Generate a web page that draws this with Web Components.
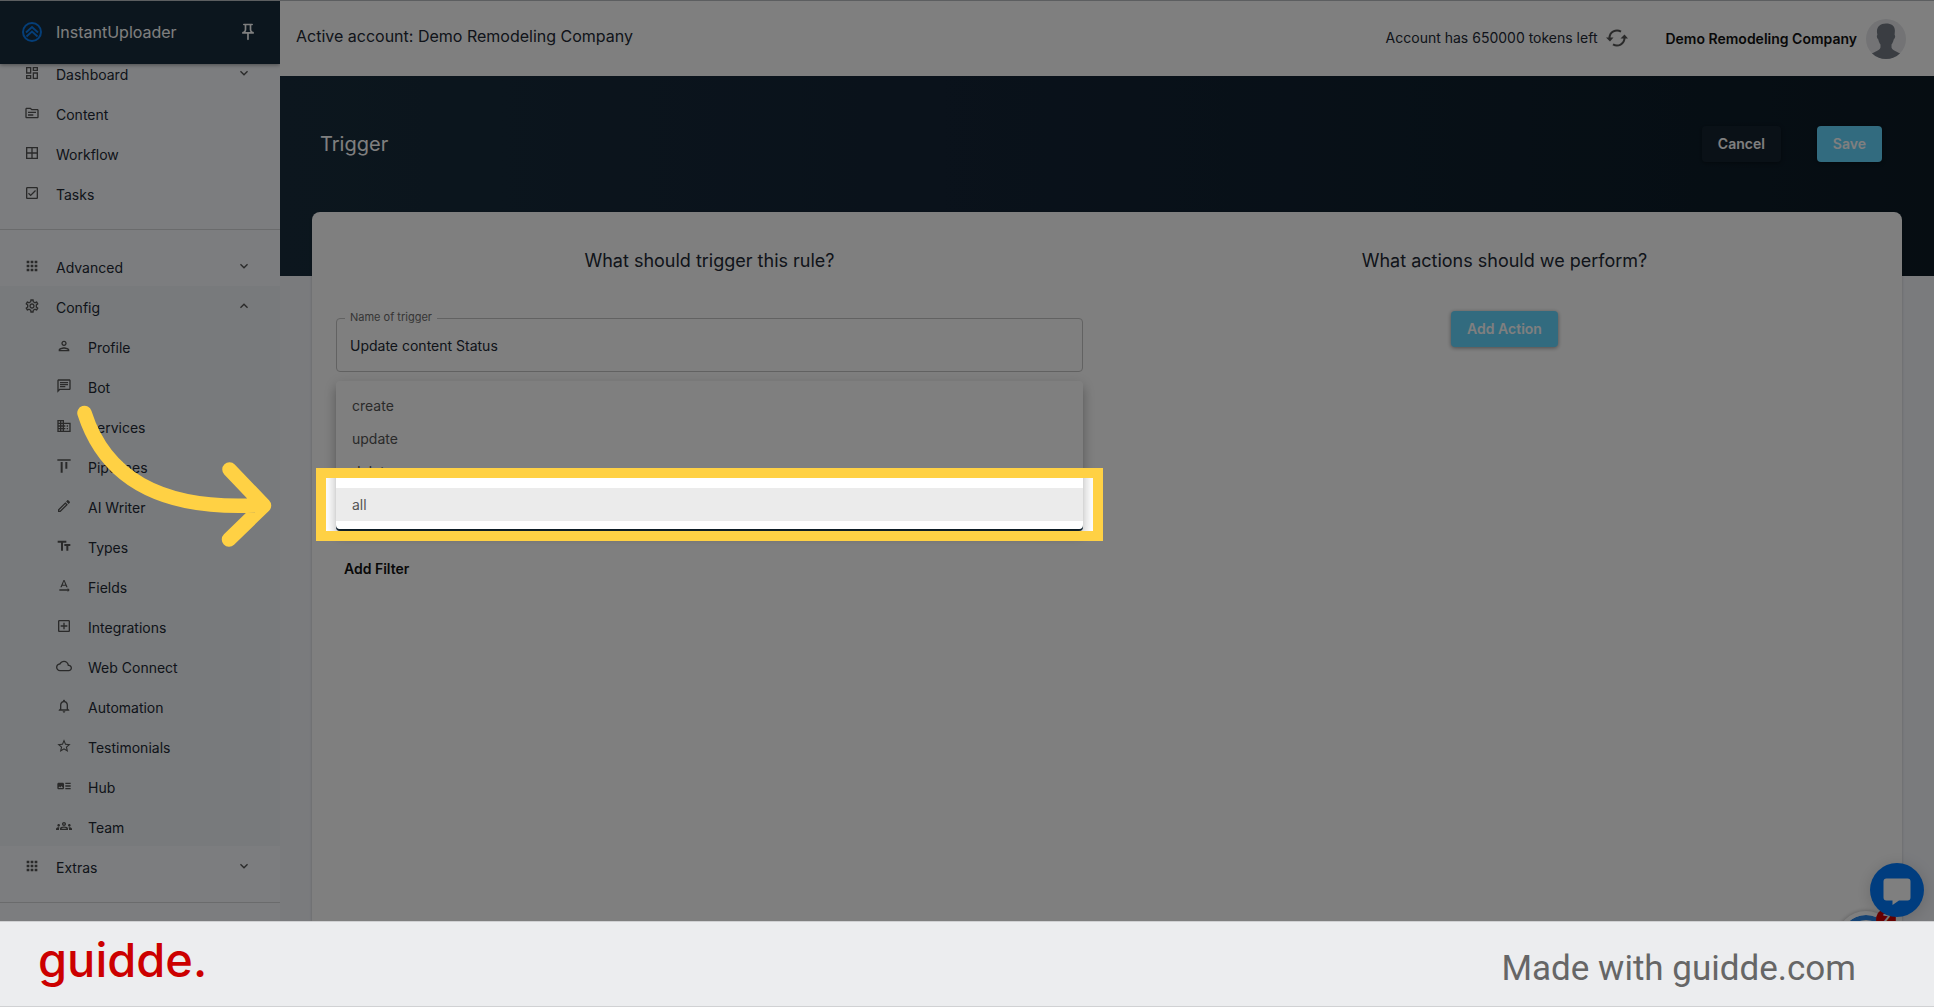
<!DOCTYPE html>
<html lang="en">
<head>
<meta charset="utf-8">
<title>InstantUploader</title>
<style>
  html, body {
    height: 100%;
    margin: 0;
  }

  body {
    --navy: #182d3c;
    --accent: #64d6ff;
    --ink: #222934;
    --mark: #ffd144;
    font-family: Inter, "Liberation Sans", sans-serif;
    font-size: 14px;
    color: var(--ink);
  }
</style>
</head>
<body>
<app-shell>
  <side-nav slot="nav">
    <nav-item icon="dashboard" toggle="down">Dashboard</nav-item>
    <nav-item icon="topic">Content</nav-item>
    <nav-item icon="grid">Workflow</nav-item>
    <nav-item icon="check">Tasks</nav-item>
    <nav-divider></nav-divider>
    <nav-item icon="apps" toggle="down">Advanced</nav-item>
    <nav-group>
      <nav-item icon="settings" toggle="up">Config</nav-item>
      <nav-item sub icon="person">Profile</nav-item>
      <nav-item sub icon="chat">Bot</nav-item>
      <nav-item sub icon="business">Services</nav-item>
      <nav-item sub icon="alignTop">Pipelines</nav-item>
      <nav-item sub icon="pencil">AI Writer</nav-item>
      <nav-item sub icon="textFields">Types</nav-item>
      <nav-item sub icon="textRotation">Fields</nav-item>
      <nav-item sub icon="addBox">Integrations</nav-item>
      <nav-item sub icon="cloud">Web Connect</nav-item>
      <nav-item sub icon="bell">Automation</nav-item>
      <nav-item sub icon="star">Testimonials</nav-item>
      <nav-item sub icon="artTrack">Hub</nav-item>
      <nav-item sub icon="groups">Team</nav-item>
    </nav-group>
    <nav-item icon="apps" toggle="down">Extras</nav-item>
    <nav-divider></nav-divider>
  </side-nav>
  <top-bar slot="top" account="Demo Remodeling Company" tokens="650000"></top-bar>
  <trigger-page slot="page"></trigger-page>
  <chat-launcher slot="chat"></chat-launcher>
  <guide-overlay slot="overlay"></guide-overlay>
  <guide-banner slot="banner"></guide-banner>
</app-shell>

<script>
const ICONS = {
  dashboard: "M19 5v2h-4V5h4M9 5v6H5V5h4m10 8v6h-4v-6h4M9 17v2H5v-2h4M21 3h-8v6h8V3zM11 3H3v10h8V3zm10 8h-8v10h8V11zm-10 4H3v6h8v-6z",
  topic: "M20 6h-8l-2-2H4c-1.1 0-1.99.9-1.99 2L2 18c0 1.1.9 2 2 2h16c1.1 0 2-.9 2-2V8c0-1.1-.9-2-2-2zm0 12H4V6h5.17l2 2H20v10zm-2-6H6v-2h12v2zm-4 4H6v-2h8v2z",
  grid: "M3 3v18h18V3H3zm8 16H5v-6h6v6zm0-8H5V5h6v6zm8 8h-6v-6h6v6zm0-8h-6V5h6v6z",
  check: "M19 3H5c-1.1 0-2 .9-2 2v14c0 1.1.9 2 2 2h14c1.1 0 2-.9 2-2V5c0-1.1-.9-2-2-2zm0 16H5V5h14v14zM17.99 9l-1.41-1.42-6.59 6.59-2.58-2.57-1.42 1.41 4 3.99z",
  apps: "M4 8h4V4H4v4zm6 12h4v-4h-4v4zm-6 0h4v-4H4v4zm0-6h4v-4H4v4zm6 0h4v-4h-4v4zm6-10v4h4V4h-4zm-6 4h4V4h-4v4zm6 6h4v-4h-4v4zm0 6h4v-4h-4v4z",
  down: "M16.59 8.59L12 13.17 7.41 8.59 6 10l6 6 6-6z",
  up: "M12 8l-6 6 1.41 1.41L12 10.83l4.59 4.58L18 14z",
  settings: "M19.43 12.98c.04-.32.07-.64.07-.98 0-.34-.03-.66-.07-.98l2.11-1.65c.19-.15.24-.42.12-.64l-2-3.46c-.09-.16-.26-.25-.44-.25-.06 0-.12.01-.17.03l-2.49 1c-.52-.4-1.08-.73-1.69-.98l-.38-2.65C14.46 2.18 14.25 2 14 2h-4c-.25 0-.46.18-.49.42l-.38 2.65c-.61.25-1.17.59-1.69.98l-2.49-1c-.06-.02-.12-.03-.18-.03-.17 0-.34.09-.43.25l-2 3.46c-.13.22-.07.49.12.64l2.11 1.65c-.04.32-.07.65-.07.98 0 .33.03.66.07.98l-2.11 1.65c-.19.15-.24.42-.12.64l2 3.46c.09.16.26.25.44.25.06 0 .12-.01.17-.03l2.49-1c.52.4 1.08.73 1.69.98l.38 2.65c.03.24.24.42.49.42h4c.25 0 .46-.18.49-.42l.38-2.65c.61-.25 1.17-.59 1.69-.98l2.49 1c.06.02.12.03.18.03.17 0 .34-.09.43-.25l2-3.46c.12-.22.07-.49-.12-.64l-2.11-1.65zm-1.98-1.71c.04.31.05.52.05.73 0 .21-.02.43-.05.73l-.14 1.13.89.7 1.08.84-.7 1.21-1.27-.51-1.04-.42-.9.68c-.43.32-.84.56-1.25.73l-1.06.43-.16 1.13-.2 1.35h-1.4l-.19-1.35-.16-1.13-1.06-.43c-.43-.18-.83-.41-1.23-.71l-.91-.7-1.06.43-1.27.51-.7-1.21 1.08-.84.89-.7-.14-1.13c-.03-.31-.05-.54-.05-.74s.02-.43.05-.73l.14-1.13-.89-.7-1.08-.84.7-1.21 1.27.51 1.04.42.9-.68c.43-.32.84-.56 1.25-.73l1.06-.43.16-1.13.2-1.35h1.39l.19 1.35.16 1.13 1.06.43c.43.18.83.41 1.23.71l.91.7 1.06-.43 1.27-.51.7 1.21-1.07.85-.89.7.14 1.13zM12 8c-2.21 0-4 1.79-4 4s1.79 4 4 4 4-1.79 4-4-1.79-4-4-4zm0 6c-1.1 0-2-.9-2-2s.9-2 2-2 2 .9 2 2-.9 2-2 2z",
  person: "M12 6c1.1 0 2 .9 2 2s-.9 2-2 2-2-.9-2-2 .9-2 2-2m0 10c2.7 0 5.8 1.29 6 2H6c.23-.72 3.31-2 6-2m0-12C9.79 4 8 5.79 8 8s1.79 4 4 4 4-1.79 4-4-1.79-4-4-4zm0 10c-2.67 0-8 1.34-8 4v2h16v-2c0-2.66-5.33-4-8-4z",
  chat: "M4 4h16v12H5.17L4 17.17V4m0-2c-1.1 0-1.99.9-1.99 2L2 22l4-4h14c1.1 0 2-.9 2-2V4c0-1.1-.9-2-2-2H4zm2 10h8v2H6v-2zm0-3h12v2H6V9zm0-3h12v2H6V6z",
  business: "M12 7V3H2v18h20V7H12zM6 19H4v-2h2v2zm0-4H4v-2h2v2zm0-4H4V9h2v2zm0-4H4V5h2v2zm4 12H8v-2h2v2zm0-4H8v-2h2v2zm0-4H8V9h2v2zm0-4H8V5h2v2zm10 12h-8v-2h2v-2h-2v-2h2v-2h-2V9h8v10zm-2-8h-2v2h2v-2zm0 4h-2v2h2v-2z",
  alignTop: "M22 2v2H2V2h20zM7 22h3V6H7v16zm7-6h3V6h-3v10z",
  pencil: "M14.06 9.02l.92.92L5.92 19H5v-.92l9.06-9.06M17.66 3c-.25 0-.51.1-.7.29l-1.83 1.83 3.75 3.75 1.83-1.83c.39-.39.39-1.02 0-1.41l-2.34-2.34c-.2-.2-.45-.29-.71-.29zm-3.6 3.19L3 17.25V21h3.75L17.81 9.94l-3.75-3.75z",
  textFields: "M2.5 4v3h5v12h3V7h5V4h-13zm19 5h-9v3h3v7h3v-7h3V9z",
  textRotation: "M12.75 3h-1.5L6.5 14h2.1l.9-2.2h5l.9 2.2h2.1L12.75 3zm-2.62 7L12 4.98 13.87 10h-3.74zm10.37 8l-3-3v2H5v2h12.5v2l3-3z",
  addBox: "M19 3H5c-1.11 0-2 .9-2 2v14c0 1.1.89 2 2 2h14c1.1 0 2-.9 2-2V5c0-1.1-.9-2-2-2zm0 16H5V5h14v14zm-8-2h2v-4h4v-2h-4V7h-2v4H7v2h4z",
  cloud: "M19.35 10.04C18.67 6.59 15.64 4 12 4 9.11 4 6.6 5.64 5.35 8.04 2.34 8.36 0 10.91 0 14c0 3.31 2.69 6 6 6h13c2.76 0 5-2.24 5-5 0-2.64-2.05-4.78-4.65-4.96zM19 18H6c-2.21 0-4-1.79-4-4 0-2.05 1.53-3.76 3.56-3.97l1.07-.11.5-.95C8.08 7.14 9.94 6 12 6c2.62 0 4.88 1.86 5.39 4.43l.3 1.5 1.53.11c1.56.1 2.78 1.41 2.78 2.96 0 1.65-1.35 3-3 3z",
  bell: "M12 22c1.1 0 2-.9 2-2h-4c0 1.1.9 2 2 2zm6-6v-5c0-3.07-1.63-5.64-4.5-6.32V4c0-.83-.67-1.5-1.5-1.5s-1.5.67-1.5 1.5v.68C7.64 5.36 6 7.92 6 11v5l-2 2v1h16v-1l-2-2zm-2 1H8v-6c0-2.48 1.51-4.5 4-4.5s4 2.02 4 4.5v6z",
  star: "M22 9.24l-7.19-.62L12 2 9.19 8.63 2 9.24l5.46 4.73L5.82 21 12 17.27 18.18 21l-1.63-7.03L22 9.24zM12 15.4l-3.76 2.27 1-4.28-3.32-2.88 4.38-.38L12 6.1l1.71 4.04 4.38.38-3.32 2.88 1 4.28L12 15.4z",
  artTrack: "M22 13h-8v-2h8v2zm0-6h-8v2h8V7zm-8 10h8v-2h-8v2zm-2-8v6c0 1.1-.9 2-2 2H4c-1.1 0-2-.9-2-2V9c0-1.1.9-2 2-2h6c1.1 0 2 .9 2 2zm-1.5 6l-2.25-3-1.75 2.26-1.25-1.51L3.5 15h7z",
  groups: "M4 13c1.1 0 2-.9 2-2s-.9-2-2-2-2 .9-2 2 .9 2 2 2zm1.13 1.1c-.37-.06-.74-.1-1.13-.1-.99 0-1.93.21-2.78.58C.48 14.9 0 15.62 0 16.43V18h4.5v-1.61c0-.83.23-1.61.63-2.29zM20 13c1.1 0 2-.9 2-2s-.9-2-2-2-2 .9-2 2 .9 2 2 2zm4 3.43c0-.81-.48-1.53-1.22-1.85-.85-.37-1.79-.58-2.78-.58-.39 0-.76.04-1.13.1.4.68.63 1.46.63 2.29V18H24v-1.57zm-7.76-2.78c-1.17-.52-2.61-.9-4.24-.9s-3.07.39-4.24.9C6.68 14.13 6 15.21 6 16.39V18h12v-1.61c0-1.18-.68-2.26-1.76-2.74zM8.07 16c.09-.23.13-.39.91-.69.97-.38 1.99-.56 3.02-.56s2.05.18 3.02.56c.77.3.81.46.91.69H8.07zM12 8c.55 0 1 .45 1 1s-.45 1-1 1-1-.45-1-1 .45-1 1-1m0-2c-1.66 0-3 1.34-3 3s1.34 3 3 3 3-1.34 3-3-1.34-3-3-3z",
  pin: "M14 4v5c0 1.12.37 2.16 1 3H9c.65-.86 1-1.9 1-3V4h4m3-2H7c-.55 0-1 .45-1 1s.45 1 1 1h1v5c0 1.66-1.34 3-3 3v2h5.97v7l1 1 1-1v-7H19v-2c-1.66 0-3-1.34-3-3V4h1c.55 0 1-.45 1-1s-.45-1-1-1z"
};

class BaseElement extends HTMLElement {
  constructor() {
    super();
    this.attachShadow({ mode: "open" });
  }

  connectedCallback() {
    this.shadowRoot.innerHTML = `<style>${this.styles}</style>${this.markup}`;
  }
}

class AppShell extends BaseElement {
  get styles() {
    return `
      :host {
        display: grid;
        grid-template: minmax(0, 1fr) auto / 280px minmax(0, 1fr);
        height: 100vh;
        box-sizing: border-box;
        border-top: 1px solid #5c5e60;
        overflow: hidden;
        position: relative;
      }

      main {
        display: flex;
        flex-direction: column;
        min-height: 0;
        overflow: hidden;
      }

      ::slotted([slot="overlay"]) {
        z-index: 2;
      }

      ::slotted([slot="banner"]) {
        z-index: 3;
        grid-column: 1 / -1;
      }
    `;
  }

  get markup() {
    return `
      <slot name="nav"></slot>
      <main>
        <slot name="top"></slot>
        <slot name="page"></slot>
      </main>
      <slot name="chat"></slot>
      <slot name="overlay"></slot>
      <slot name="banner"></slot>
    `;
  }
}

class AppIcon extends BaseElement {
  get styles() {
    return `
      :host {
        display: block;
        flex: none;
        width: 16px;
        height: 16px;
      }

      svg {
        display: block;
        width: 100%;
        height: 100%;
        fill: currentColor;
      }
    `;
  }

  get markup() {
    return `<svg viewBox="0 0 24 24" aria-hidden="true"><path d="${ICONS[this.getAttribute("name")]}"/></svg>`;
  }
}

class SideNav extends BaseElement {
  get styles() {
    return `
      :host {
        display: block;
        min-height: 0;
        overflow: hidden;
        background: #f9fbfe;
      }

      header {
        position: relative;
        z-index: 1;
        display: flex;
        align-items: center;
        gap: 14px;
        height: 63px;
        box-sizing: border-box;
        padding: 0 22px 2px;
        background: var(--navy);
        color: #fff;
        font-size: 16px;
        box-shadow: 0 1px 4px rgba(0, 0, 0, .4);
      }

      a {
        flex: 1;
        color: inherit;
        text-decoration: none;
      }

      button {
        padding: 0;
        border: 0;
        background: none;
        color: inherit;
      }

      app-icon {
        width: 20px;
        height: 20px;
      }

      /* the list is scrolled slightly under the header */
      nav {
        margin-top: -11px;
      }
    `;
  }

  get markup() {
    return `
      <header>
        <svg width="20" height="20" viewBox="0 0 20 20" fill="none" stroke="#0a7cf0" stroke-width="2" aria-hidden="true">
          <circle cx="10" cy="10" r="9"/>
          <path d="M4 10.500 10 5l6 5.500M4.500 14.500 10 9.500l5.500 5" stroke-width="1.900"/>
        </svg>
        <a href="#">InstantUploader</a>
        <button aria-label="Pin"><app-icon name="pin"></app-icon></button>
      </header>
      <nav><slot></slot></nav>
    `;
  }
}

class NavItem extends BaseElement {
  get styles() {
    return `
      :host {
        display: block;
      }

      a {
        display: flex;
        align-items: center;
        gap: 16px;
        height: 40px;
        padding: 0 28px 0 24px;
        color: inherit;
        text-decoration: none;
      }

      :host([sub]) a {
        padding-left: 56px;
      }

      span {
        flex: 1;
        padding-top: 2px;
      }

      app-icon {
        color: #545454;
      }
    `;
  }

  get markup() {
    const toggle = this.getAttribute("toggle");
    return `
      <a href="#">
        <app-icon name="${this.getAttribute("icon")}"></app-icon>
        <span><slot></slot></span>
        ${toggle ? `<app-icon name="${toggle}"></app-icon>` : ""}
      </a>
    `;
  }
}

class NavGroup extends BaseElement {
  get styles() {
    return `
      :host {
        display: block;
        background: #f1f5f8;
      }
    `;
  }

  get markup() {
    return `<slot></slot>`;
  }
}

class NavDivider extends BaseElement {
  get styles() {
    return `
      :host {
        display: block;
        height: 1px;
        margin: 16px 0;
        background: #d4d6d9;
      }
    `;
  }

  get markup() {
    return ``;
  }
}

class TopBar extends BaseElement {
  get styles() {
    return `
      :host {
        display: flex;
        flex: none;
        align-items: center;
        height: 75px;
        box-sizing: border-box;
        padding: 0 28px 0 16px;
        background: #fff;
      }

      h1 {
        flex: 1;
        margin: 0;
        padding-bottom: 6px;
        font-size: 16px;
        font-weight: 400;
      }

      span {
        padding-bottom: 2px;
      }

      button {
        margin: 0 37px 0 9px;
        padding: 0 0 2px;
        border: 0;
        background: none;
      }

      svg {
        display: block;
      }

      b {
        margin-right: 9px;
        font-weight: 600;
        color: #111;
      }
    `;
  }

  get markup() {
    return `
      <h1>Active account: ${this.getAttribute("account")}</h1>
      <span>Account has ${this.getAttribute("tokens")} tokens left</span>
      <button aria-label="Refresh tokens">
        <svg width="22" height="18" viewBox="0 0 22 18" fill="none" stroke="#555" stroke-width="2">
          <path d="M3.500 9A7.500 7.500 0 0 1 15 2.700M18.500 9A7.500 7.500 0 0 1 7 15.300"/>
          <path d="M0 8.500h7.500l-3.500 4zM14.500 9.500H22l-3.500-4z" fill="#555" stroke="none"/>
        </svg>
      </button>
      <b>${this.getAttribute("account")}</b>
      <svg width="40" height="40" viewBox="0 0 40 40" role="img" aria-label="Profile picture">
        <clipPath id="round"><circle cx="20" cy="20" r="20"/></clipPath>
        <g clip-path="url(#round)">
          <path fill="#e6e7ea" d="M0 0h40v40H0z"/>
          <path fill="#747a85" d="M20 4.500c-6 0-9.500 3.500-9 9l.4 2.500c-1 .3-.6 3.500.9 4.500.5 2.500 1.400 4 2.200 5v3c-1 3.500-7 4-9.500 7L8 42h24l3-6.500c-2.500-3-8.500-3.500-9.500-7v-3c.8-1 1.700-2.500 2.200-5 1.500-1 1.900-4.200.9-4.500l.2-3C29.500 7.500 26 4.500 20 4.500z"/>
        </g>
      </svg>
    `;
  }
}

class ActionButton extends BaseElement {
  get styles() {
    return `
      :host {
        display: inline-block;
      }

      button {
        display: block;
        height: 36px;
        padding: 0 16px 2px;
        border: 0;
        border-radius: 4px;
        background: var(--accent);
        box-shadow: 0 1px 4px rgba(0, 0, 0, .4);
        color: #fff;
        font: 600 14px Inter, "Liberation Sans", sans-serif;
      }

      :host([kind="dark"]) button {
        background: #15232f;
      }

      :host([kind="text"]) button {
        padding: 0 8px 2px;
        background: none;
        box-shadow: none;
        color: #111;
      }
    `;
  }

  get markup() {
    return `<button type="button"><slot></slot></button>`;
  }
}

class TextField extends BaseElement {
  get styles() {
    return `
      :host {
        display: block;
        position: relative;
      }

      label {
        position: absolute;
        top: -8px;
        left: 9px;
        padding: 0 5px;
        background: #fff;
        color: #6b6b6b;
        font-size: 11px;
        line-height: 14px;
      }

      input {
        display: block;
        width: 100%;
        height: 54px;
        box-sizing: border-box;
        padding: 0 13px;
        border: 1px solid #c4c4c4;
        border-radius: 4px;
        background: none;
        color: inherit;
        font: inherit;
      }
    `;
  }

  get markup() {
    return `
      <label for="field">${this.getAttribute("label")}</label>
      <input id="field" type="text" value="${this.getAttribute("value")}">
    `;
  }
}

class MenuSelect extends BaseElement {
  get styles() {
    return `
      :host {
        display: block;
        position: relative;
      }

      select {
        display: block;
        width: 100%;
        height: 54px;
        padding: 0 13px;
        border: 2px solid var(--navy);
        border-radius: 4px;
        background: #fff;
        color: inherit;
        font: inherit;
        appearance: none;
      }

      ul {
        position: absolute;
        right: 0;
        bottom: 2px;
        left: 0;
        margin: 0;
        padding: 8px 0;
        border-radius: 4px;
        background: #fff;
        box-shadow: 0 5px 5px -3px rgba(0, 0, 0, .2), 0 8px 10px 1px rgba(0, 0, 0, .14), 0 3px 14px 2px rgba(0, 0, 0, .12);
        list-style: none;
      }

      li {
        padding: 0 16px;
        color: #555;
        line-height: 33px;
      }

      li[aria-selected="true"] {
        background: #ebebeb;
      }
    `;
  }

  get markup() {
    const value = this.getAttribute("value");
    const options = this.getAttribute("options").split(",");
    return `
      <select aria-label="Event">
        ${options.map(o => `<option${o === value ? " selected" : ""}>${o}</option>`).join("")}
      </select>
      <ul role="listbox">
        ${options.map(o => `<li role="option" aria-selected="${o === value}">${o}</li>`).join("")}
      </ul>
    `;
  }
}

class TriggerPage extends BaseElement {
  get styles() {
    return `
      :host {
        display: flex;
        flex: 1;
        flex-direction: column;
        min-height: 0;
        padding: 0 32px;
        background: linear-gradient(90deg, #182d3c, #142436 40%, #0e1f2c 75%, #0c1a25) top / 100% 200px no-repeat #f4f6fb;
      }

      header {
        display: flex;
        align-items: center;
        gap: 36px;
        height: 136px;
        padding: 0 20px 0 8px;
        color: #fff;
      }

      h2 {
        flex: 1;
        margin: 0;
        font-size: 20px;
        font-weight: 400;
      }

      .card {
        display: grid;
        flex: 1;
        grid-template-columns: 1fr 1fr;
        gap: 48px;
        padding: 37px 24px;
        border-radius: 8px 8px 0 0;
        background: #fff;
        box-shadow: 0 1px 3px rgba(0, 0, 0, .2);
      }

      h3 {
        margin: 0 0 45px;
        font-size: 18px;
        font-weight: 400;
        line-height: 24px;
        text-align: center;
      }

      menu-select {
        margin: 105px 0 20px;
      }

      .actions {
        text-align: center;
      }

      .actions h3 {
        margin-bottom: 38px;
      }
    `;
  }

  get markup() {
    return `
      <header>
        <h2>Trigger</h2>
        <action-button kind="dark">Cancel</action-button>
        <action-button>Save</action-button>
      </header>
      <div class="card">
        <section>
          <h3>What should trigger this rule?</h3>
          <text-field label="Name of trigger" value="Update content Status"></text-field>
          <menu-select options="create,update,delete,all" value="all"></menu-select>
          <action-button kind="text">Add Filter</action-button>
        </section>
        <section class="actions">
          <h3>What actions should we perform?</h3>
          <action-button>Add Action</action-button>
        </section>
      </div>
    `;
  }
}

class ChatLauncher extends BaseElement {
  get styles() {
    return `
      :host {
        position: absolute;
        right: 10px;
        bottom: 36px;
        width: 88px;
        height: 108px;
      }

      button {
        position: absolute;
        top: 0;
        right: 0;
        display: grid;
        place-items: center;
        width: 54px;
        height: 54px;
        padding: 0;
        border: 0;
        border-radius: 50%;
        background: #007bff;
        box-shadow: 0 2px 16px rgba(0, 0, 0, .16);
      }

      .help {
        top: 48px;
        right: 28px;
        width: 60px;
        height: 60px;
        border: 4px solid #fff;
        background: #fff;
        box-shadow: 0 0 4px rgba(0, 0, 0, .3), inset 0 0 0 5px #2a86e8;
      }

      .count {
        position: absolute;
        top: 46px;
        right: 28px;
        width: 20px;
        height: 20px;
        border-radius: 50%;
        background: #d80000;
        color: #fff;
        font-size: 13px;
        font-weight: 700;
        line-height: 20px;
        text-align: center;
        transform: rotate(12deg);
      }
    `;
  }

  get markup() {
    return `
      <button class="help" aria-label="Help"></button>
      <span class="count">7</span>
      <button aria-label="Open chat">
        <svg width="28" height="30" viewBox="0 0 28 30" fill="#fff">
          <path d="M3.500 3.500h21a3 3 0 0 1 3 3v16a3 3 0 0 1-3 3H16L9.500 30v-4.500h-6a3 3 0 0 1-3-3v-16a3 3 0 0 1 3-3z"/>
        </svg>
      </button>
    `;
  }
}

// Darkens the page around one highlighted area and points an arrow at it.
class GuideOverlay extends BaseElement {
  get styles() {
    return `
      :host {
        position: absolute;
        inset: 0;
        overflow: hidden;
        pointer-events: none;
      }

      .spotlight {
        position: absolute;
        top: 467px;
        left: 316px;
        width: calc(50vw - 180px);
        height: 73px;
        box-sizing: border-box;
        border: 10px solid var(--mark);
        box-shadow: 0 0 0 200vmax rgba(0, 0, 0, .5);
      }

      svg {
        position: absolute;
        top: 399px;
        left: 70px;
      }
    `;
  }

  get markup() {
    return `
      <div class="spotlight"></div>
      <svg width="210" height="154" viewBox="70 400 210 154" fill="none" stroke="var(--mark)" stroke-width="14.500" stroke-linecap="round" stroke-linejoin="round" aria-hidden="true">
        <path d="M84.500 413C104 474 156 512 263 505M229.500 469.500 264 505.500 229 539.500"/>
      </svg>
    `;
  }
}

class GuideBanner extends BaseElement {
  get styles() {
    return `
      :host {
        position: relative;
        display: flex;
        align-items: center;
        justify-content: space-between;
        height: 86px;
        box-sizing: border-box;
        padding: 0 78px 0 38px;
        border: solid #d0d1d3;
        border-width: 1px 0;
        background: #ecedef;
      }

      a {
        padding-bottom: 8px;
        color: #c00;
        font-size: 47px;
        font-weight: 500;
        line-height: 56px;
        text-decoration: none;
      }

      span {
        padding-top: 8px;
        color: #666;
        font: 35px Roboto, "Liberation Sans", sans-serif;
      }
    `;
  }

  get markup() {
    return `
      <a href="#">guidde.</a>
      <span>Made with guidde.com</span>
    `;
  }
}

customElements.define("app-icon", AppIcon);
customElements.define("app-shell", AppShell);
customElements.define("side-nav", SideNav);
customElements.define("nav-item", NavItem);
customElements.define("nav-group", NavGroup);
customElements.define("nav-divider", NavDivider);
customElements.define("top-bar", TopBar);
customElements.define("action-button", ActionButton);
customElements.define("text-field", TextField);
customElements.define("menu-select", MenuSelect);
customElements.define("trigger-page", TriggerPage);
customElements.define("chat-launcher", ChatLauncher);
customElements.define("guide-overlay", GuideOverlay);
customElements.define("guide-banner", GuideBanner);
</script>
</body>
</html>
